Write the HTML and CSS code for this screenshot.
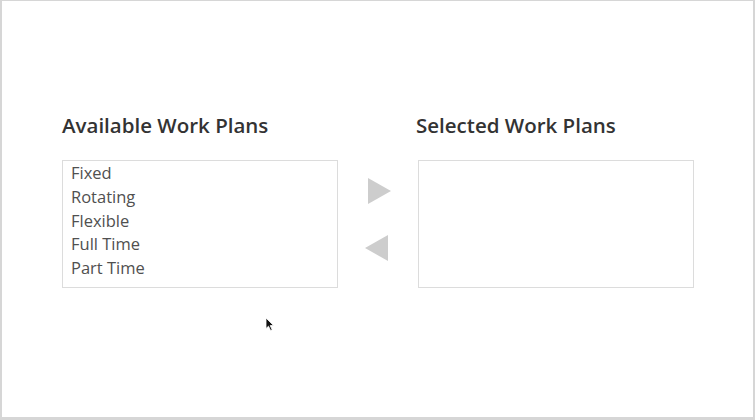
FILE: index.html
```html
<!DOCTYPE html>
<html>
<head>
	<meta charset="utf-8" />
	<title>Work Plans</title>
	<link rel="stylesheet" href="styles.css">
</head>
<body>
<div class="frame">
	<div class="panels">
		<div class="column">
			<h2 class="title">Available Work Plans</h2>
			<ul class="listbox">
				<li>Fixed</li>
				<li>Rotating</li>
				<li>Flexible</li>
				<li>Full Time</li>
				<li>Part Time</li>
			</ul>
		</div>
		<div class="arrows">
			<span class="arrow right"></span>
			<span class="arrow left"></span>
		</div>
		<div class="column">
			<h2 class="title">Selected Work Plans</h2>
			<ul class="listbox"></ul>
		</div>
	</div>
	<svg class="cursor" width="10" height="15" viewBox="0 0 10 15">
		<path d="M1 1 L1 11.5 L3.5 9.2 L5.6 13.6 L7.2 12.8 L5.2 8.6 L8.5 8.4 Z" fill="#111" stroke="#fff" stroke-width="0.8"/>
	</svg>
</div>
</body>
</html>
```

FILE: styles.css
```css
body{
	margin: 0;
	padding: 0;
	font-family: "Open Sans", "Liberation Sans", sans-serif;
	background: #fff;
}
.frame{
	position: relative;
	width: 755px;
	height: 420px;
	box-sizing: border-box;
	border: 2px solid #d6d6d6;
	border-top-width: 1px;
	border-bottom-width: 3px;
	padding: 112px 0 0 60px;
}
.panels{
	display: flex;
}
.column{
	width: 276px;
}
.title{
	margin: 0 0 23px 0;
	font-size: 20.5px;
	line-height: 24px;
	font-weight: 600;
	color: #333;
}
.column:last-child .title{
	margin-left: -2px;
}
/* liste */
.listbox{
	margin: 0;
	padding: 0 8px;
	height: 128px;
	box-sizing: border-box;
	border: 1px solid #dcdcdc;
	list-style: none;
	font-size: 16.5px;
	line-height: 23.8px;
	color: #505050;
}
/* boutons fleches */
.arrows{
	width: 80px;
	display: flex;
	flex-direction: column;
	align-items: center;
	padding-top: 65px;
	gap: 31px;
}
.arrow{
	display: block;
	width: 0;
	height: 0;
	border-top: 13px solid transparent;
	border-bottom: 13px solid transparent;
}
.arrow.right{
	border-left: 23px solid #cdcdcd;
	margin-left: 2px;
}
.arrow.left{
	border-right: 23px solid #cdcdcd;
	margin-left: -4px;
}
.cursor{
	position: absolute;
	left: 263px;
	top: 316px;
}
```
